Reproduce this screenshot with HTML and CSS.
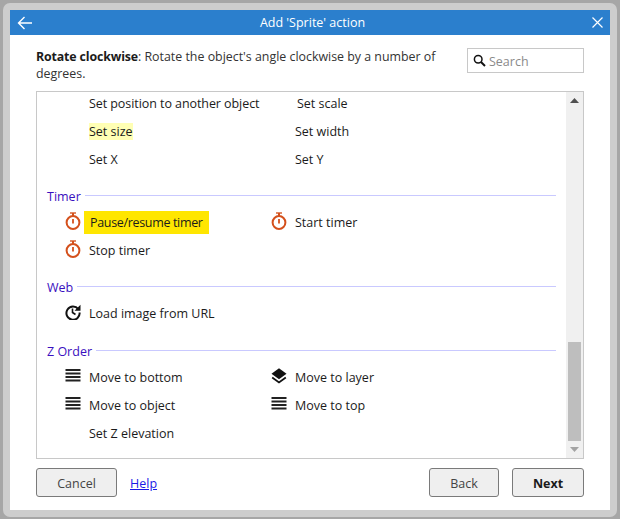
FILE: index.html
```html
<!DOCTYPE html>
<html lang="en">
<head>
<meta charset="utf-8">
<title>Add 'Sprite' action</title>
<link rel="stylesheet" href="styles.css">
</head>
<body>
<div class="frame">
  <div class="dialog">
    <header class="titlebar">
      <svg class="tb-icon" width="16" height="14" viewBox="0 0 16 14"><path d="M7.5 1 1.5 7l6 6M1.5 7H15" fill="none" stroke="#fff" stroke-width="1.4"/></svg>
      <span class="title">Add 'Sprite' action</span>
      <svg class="tb-icon" width="11" height="11" viewBox="0 0 11 11"><path d="M.5.5l10 10M10.500.5l-10 10" fill="none" stroke="#fff" stroke-width="1.2"/></svg>
    </header>
    <section class="intro">
      <p class="desc"><b>Rotate clockwise</b>: Rotate the object's angle clockwise by a number of degrees.</p>
      <label class="search">
        <svg width="13" height="13" viewBox="0 0 13 13"><circle cx="5.200" cy="5.200" r="3.800" fill="none" stroke="#111" stroke-width="1.500"/><path d="M8 8l4 4" stroke="#111" stroke-width="2"/></svg>
        <span>Search</span>
      </label>
    </section>
    <section class="listbox">
      <div class="list">
        <div class="row first">
          <div class="item"><span class="lbl tight">Set position to another object</span></div>
          <div class="item shift"><span class="lbl">Set scale</span></div>
        </div>
        <div class="row">
          <div class="item"><span class="lbl soft">Set size</span></div>
          <div class="item"><span class="lbl">Set width</span></div>
        </div>
        <div class="row">
          <div class="item"><span class="lbl">Set X</span></div>
          <div class="item"><span class="lbl">Set Y</span></div>
        </div>
        <div class="group"><span>Timer</span><i></i></div>
        <div class="row">
          <div class="item"><svg class="ico tall" viewBox="0 0 16 18"><use href="#timer"/></svg><span class="lbl hot">Pause/resume timer</span></div>
          <div class="item"><svg class="ico tall" viewBox="0 0 16 18"><use href="#timer"/></svg><span class="lbl">Start timer</span></div>
        </div>
        <div class="row">
          <div class="item"><svg class="ico tall" viewBox="0 0 16 18"><use href="#timer"/></svg><span class="lbl">Stop timer</span></div>
        </div>
        <div class="group"><span>Web</span><i></i></div>
        <div class="row">
          <div class="item"><svg class="ico" viewBox="0 0 16 16"><path d="M13.300 5.200A6.600 6.600 0 1 0 14.600 8.500" fill="none" stroke="#111" stroke-width="2"/><path d="M15.500 .8V6.800H9.500z" fill="#111"/><path d="M7.500 4.500V8.500L10.500 10.500" fill="none" stroke="#111" stroke-width="1.600"/></svg><span class="lbl">Load image from URL</span></div>
        </div>
        <div class="group g-z"><span>Z Order</span><i></i></div>
        <div class="row">
          <div class="item"><svg class="ico" viewBox="0 0 16 16"><use href="#lines"/></svg><span class="lbl">Move to bottom</span></div>
          <div class="item"><svg class="ico" viewBox="0 0 16 16"><path d="M8 .200 15.500 5.700 8 11.200 .5 5.700z" fill="#111"/><path d="M1.200 9.500 8 14.500l6.800-5" fill="none" stroke="#111" stroke-width="1.800"/></svg><span class="lbl">Move to layer</span></div>
        </div>
        <div class="row">
          <div class="item"><svg class="ico" viewBox="0 0 16 16"><use href="#lines"/></svg><span class="lbl">Move to object</span></div>
          <div class="item"><svg class="ico" viewBox="0 0 16 16"><use href="#lines"/></svg><span class="lbl">Move to top</span></div>
        </div>
        <div class="row">
          <div class="item"><span class="lbl">Set Z elevation</span></div>
        </div>
      </div>
      <div class="scrollbar">
        <svg width="9" height="5" viewBox="0 0 9 5"><path d="M4.500 0 9 5H0z" fill="#505050"/></svg>
        <div class="track"><div class="thumb"></div></div>
        <svg width="9" height="5" viewBox="0 0 9 5"><path d="M0 0h9L4.500 5z" fill="#a3a3a3"/></svg>
      </div>
    </section>
    <footer class="actions">
      <button class="btn cancel">Cancel</button>
      <a class="help" href="#">Help</a>
      <span class="spring"></span>
      <button class="btn back">Back</button>
      <button class="btn next">Next</button>
    </footer>
  </div>
</div>
<svg class="defs" width="0" height="0">
  <defs>
    <g id="timer">
      <circle cx="8" cy="10.500" r="6.400" fill="none" stroke="#d4501c" stroke-width="2"/>
      <path d="M5 1h6" stroke="#e08a66" stroke-width="2"/>
      <path d="M8 1v3" stroke="#d4501c" stroke-width="2"/>
      <path d="M8 7v4.500" stroke="#d4501c" stroke-width="1.800"/>
    </g>
    <g id="lines">
      <path d="M.5 2h15M.5 5.500h15M.5 9h15M.5 12.500h15" stroke="#222" stroke-width="2"/>
    </g>
  </defs>
</svg>
</body>
</html>
```
FILE: styles.css
```css
* { box-sizing: border-box; }
html, body { margin: 0; height: 100%; }
body {
  width: 620px;
  height: 519px;
  overflow: hidden;
  background: #a6a6a6;
  padding: 3px 3px 2px 3px;
  font-family: "Open Sans", "Noto Sans", sans-serif;
  font-size: 12.5px;
  color: #1b1b1b;
}
.frame {
  height: 100%;
  background: #cdcdcd;
  border-radius: 7px;
  padding: 7px;
}
.dialog {
  height: 100%;
  background: #fff;
  display: flex;
  flex-direction: column;
}
.titlebar {
  height: 25px;
  flex: none;
  background: #2b7fcd;
  color: #fff;
  display: flex;
  align-items: center;
  justify-content: space-between;
  padding: 0 7px;
}
.title { font-size: 12.5px; }
.tb-icon { display: block; }
.intro {
  display: flex;
  justify-content: space-between;
  padding: 13px 26px 0 26px;
  height: 56px;
  flex: none;
}
.desc { margin: 0; width: 420px; line-height: 17px; color: #333; font-size: 12.4px; }
.desc b { color: #1b1b1b; letter-spacing: -0.15px; }
.search {
  width: 117px;
  height: 25px;
  border: 1px solid #c8c8c8;
  display: flex;
  align-items: center;
  gap: 3px;
  padding-left: 5px;
  color: #8a8a8a;
}
.search span { margin-top: 2px; }
.listbox {
  margin: 0 26px;
  height: 368px;
  flex: none;
  border: 1px solid #c8c8c8;
  display: flex;
  overflow: hidden;
}
.list { flex: 1; padding: 0 0 0 10px; min-width: 0; }
.row { display: flex; height: 28px; align-items: center; }
.row.first { margin-top: -3px; }
.item { width: 206px; display: flex; align-items: center; padding-left: 42px; position: relative; }
.item.shift { padding-left: 44px; }
.ico { position: absolute; left: 18px; top: 50%; width: 16px; height: 16px; margin-top: -9px; }
.ico.tall { height: 18px; margin-top: -10px; }
.lbl { color: #1b1b1b; white-space: nowrap; }
.tight { letter-spacing: -0.07px; }
.soft { background: #ffffb4; }
.hot { background: #ffe600; padding: 3px 6px; margin-left: -5px; letter-spacing: -0.33px; }
.group {
  display: flex;
  align-items: center;
  gap: 4px;
  color: #3a10c0;
  padding-right: 10px;
  height: 20px;
  margin: 12px 0 3px;
}
.group span { line-height: 20px; margin-top: 4px; }
.group i { flex: 1; height: 1px; background: #c9c9ff; }
.group.g-z { margin-top: 13px; }
.scrollbar {
  width: 17px;
  flex: none;
  background: #f0f0f0;
  display: flex;
  flex-direction: column;
  align-items: center;
}
.scrollbar svg { flex: none; margin: 6px 0; }
.track { flex: 1; width: 13px; display: flex; align-items: flex-end; }
.thumb { width: 100%; height: 99px; background: #bebebe; }
.actions {
  flex: 1;
  display: flex;
  align-items: flex-start;
  padding: 9px 26px 0 26px;
}
.btn {
  height: 29px;
  font: inherit;
  background: #efefef;
  border: 1px solid #7a7a7a;
  border-radius: 3px;
  color: #444;
  padding: 2px 0 0;
}
.cancel { width: 81px; }
.back { width: 70px; }
.next { width: 72px; margin-left: 13px; font-weight: 700; color: #1b1b1b; }
.help { margin-left: 13px; color: #1a1ae6; line-height: 31px; }
.spring { flex: 1; }
.defs { position: absolute; }
```
